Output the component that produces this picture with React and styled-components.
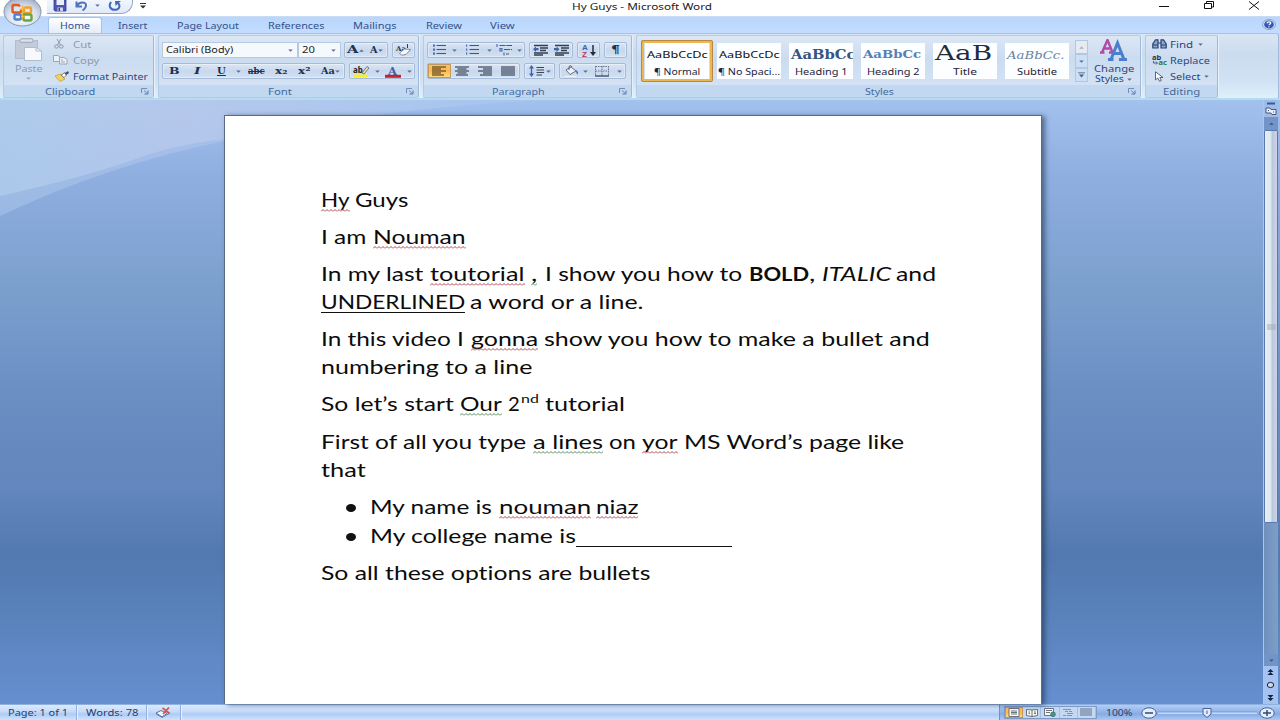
import React, { useLayoutEffect, useRef, useState } from 'react';
import styled, { createGlobalStyle, css } from 'styled-components';

const GlobalStyle = createGlobalStyle`
  * { box-sizing: border-box; }
  body {
    margin: 0;
    overflow: hidden;
    font-family: 'Noto Sans', 'Open Sans', sans-serif;
    font-size: 9.5px;
  }
  svg { display: block; flex: none; }
`;

const Window = styled.div`
  width: 1280px;
  height: 720px;
  display: flex;
  flex-direction: column;
  overflow: hidden;
  background: #bfdbff;
`;

/* ---------- fitted text ---------- */

const FitBox = styled.span`
  display: inline-block;
  flex: none;
  width: ${props => props.$w}px;
  margin-left: ${props => props.$gap || 0}px;
  white-space: nowrap;
`;

const FitInner = styled.span`
  display: inline-block;
  transform-origin: 0 50%;
`;

// stretches its text horizontally to exactly `w` pixels
function Fit({ w, gap, className, children }) {
  const ref = useRef(null);
  const [scale, setScale] = useState(1);

  useLayoutEffect(() => {
    setScale(w / ref.current.offsetWidth);
  }, [w]);

  return (
    <FitBox $w={w} $gap={gap} className={className}>
      <FitInner ref={ref} style={{ transform: `scaleX(${scale})` }}>{children}</FitInner>
    </FitBox>
  );
}

/* ---------- title bar ---------- */

const TitleBar = styled.header`
  position: relative;
  flex: none;
  height: 16px;
  display: flex;
  background: #fff;
`;

const QuickAccess = styled.div`
  width: 86px;
  height: 14px;
  margin-left: 47px;
  padding-left: 6px;
  display: flex;
  align-items: flex-start;
  border: 1px solid #98a8c4;
  border-width: 0 1px 1px 0;
  border-radius: 0 0 12px 0;
  background: linear-gradient(#f2f7fe, #dfe9f8);
`;

const QuickCaret = styled.div`
  width: 13px;
  padding: 4px 0 0 0;
`;

const QuickMore = styled.div`
  width: 20px;
  padding: 3px 0 0 7px;
`;

const TitleText = styled.div`
  margin-left: 419px;
  flex: 0 0 580px;
  height: 13px;
  line-height: 13px;
  color: #222;
`;

const WindowButtons = styled.div`
  display: flex;
  gap: 35px;
  padding: 0 0 0 7px;
`;

const Orb = styled.div`
  position: absolute;
  z-index: 2;
  left: 3px;
  top: -4px;
`;

/* ---------- tabs ---------- */

const TabRow = styled.nav`
  flex: none;
  height: 17px;
  display: flex;
  align-items: flex-end;
  background: linear-gradient(#b9d6fb, #c3dcff);
  border-top: 1px solid #c9dcf4;
  color: #33518c;
`;

const Tab = styled.div`
  height: 16px;
  line-height: 17px;
  width: ${props => props.$w}px;
  margin-left: ${props => props.$gap || 0}px;
  display: flex;
  justify-content: center;
  ${props => props.$active && css`
    background: linear-gradient(#fff, #e3ecf8);
    border: 1px solid #a9c3e6;
    border-bottom: 0;
    border-radius: 3px 3px 0 0;
    line-height: 15px;
  `}
`;

const HelpSlot = styled.div`
  margin: 0 4px 3px auto;
`;

/* ---------- ribbon ---------- */

const Ribbon = styled.section`
  flex: none;
  height: 67px;
  padding: 1px 0 0 3px;
  margin-right: 1px;
  display: flex;
  background: linear-gradient(#d9e5f4, #ccdcef 30%, #d1e2f4 75%, #dff0fb);
  border-top: 1px solid #a8c3e2;
  border-right: 1px solid #9db9dc;
  border-bottom: 2px solid #b5dcee;
  border-radius: 0 3px 3px 0;
  color: #29487f;
`;

const Group = styled.div`
  flex: none;
  width: ${props => props.$w}px;
  height: 63px;
  margin-right: 4px;
  display: flex;
  flex-direction: column;
  border: 1px solid #b3cbe6;
  border-right-color: #9fb9d9;
  border-radius: 2px;
  box-shadow: 1px 0 0 #e8f1fb;
  background: linear-gradient(#dce7f5, #ccdcf0 35%, #d5e4f5);
`;

const GroupBody = styled.div`
  flex: 1;
  position: relative;
  display: flex;
  padding-left: ${props => props.$pad || 0}px;
`;

const GroupLabel = styled.div`
  flex: none;
  height: 12px;
  line-height: 11px;
  display: flex;
  align-items: center;
  background: #c1d8f0;
  color: #45699f;
`;

const LabelText = styled.div`
  flex: 1;
  display: flex;
  justify-content: center;
  ${props => props.$shift && css`padding-right: 6px;`}
`;

const Launcher = styled.div`
  width: 12px;
`;

const PasteButton = styled.div`
  width: 46px;
  padding-top: 2px;
  display: flex;
  flex-direction: column;
  align-items: center;
  color: #8e99ad;
`;

const PasteText = styled.div`
  height: 14px;
  line-height: 14px;
  margin: 1px 0 1px;
`;

const Commands = styled.div`
  display: flex;
  flex-direction: column;
`;

const Command = styled.div`
  height: 16px;
  display: flex;
  align-items: center;
  color: ${props => (props.$off ? '#8e99ad' : '#29487f')};
`;

const CommandIcon = styled.div`
  width: ${props => props.$w || 20}px;
`;

const Rows = styled.div`
  display: flex;
  flex-direction: column;
  padding-top: 6px;
  gap: 5px;
`;

const ToolRow = styled.div`
  display: flex;
  height: 16px;
`;

const ButtonSet = styled.div`
  height: 16px;
  display: flex;
  width: ${props => props.$w}px;
  margin-right: ${props => props.$gap || 0}px;
  border: 1px solid #a5bbd8;
  border-radius: 2px;
  background: linear-gradient(#dbe6f4, #c8d8ed 50%, #d2e1f3);
  box-shadow: inset 0 0 0 1px rgba(255, 255, 255, .35);
`;

const Cell = styled.div`
  flex: ${props => (props.$w ? `0 0 ${props.$w}px` : '1')};
  display: flex;
  align-items: center;
  justify-content: center;
  color: #20304e;
  ${props => props.$active && css`
    background: linear-gradient(#f6c277, #fdb94e 50%, #ffe08a);
    outline: 1px solid #c39a5c;
    outline-offset: -1px;
  `}
`;

const Combo = styled.div`
  width: ${props => props.$w}px;
  height: 16px;
  padding: 0 4px 0 3px;
  margin-right: ${props => props.$gap || 0}px;
  display: flex;
  align-items: center;
  justify-content: space-between;
  border: 1px solid #b4c9e4;
  background: #f5f9fe;
  color: #1b1b1b;
  line-height: 14px;
`;

const Glyph = styled(Fit)`
  font-family: 'DejaVu Serif', 'Liberation Serif', serif;
  font-size: ${props => props.size || 9}px;
  font-weight: bold;
  line-height: 14px;
  font-style: ${props => (props.italic ? 'italic' : 'normal')};
  & > span {
    text-decoration: ${props => props.line || 'none'};
  }
`;

/* ---------- style gallery ---------- */

const Gallery = styled.div`
  display: flex;
  height: 42px;
  margin-top: 4px;
`;

const StyleCard = styled.div`
  width: 72px;
  height: 42px;
  padding: 3px 4px;
  ${props => props.$active && css`
    padding: 0 1px;
    border: 3px solid #eeb64e;
    outline: 1px solid #b58a46;
    outline-offset: -1px;
    border-radius: 2px;
  `}
`;

const StyleFace = styled.div`
  height: 36px;
  overflow: hidden;
  background: #fdfeff;
  display: flex;
  flex-direction: column;
  align-items: center;
  color: #1d2340;
`;

const Sample = styled.div`
  width: 100%;
  height: 21px;
  line-height: ${props => props.$lh || 24}px;
  padding-left: 2px;
  overflow: hidden;
  font-family: ${props => (props.$serif ? "'DejaVu Serif', serif" : "'Noto Sans', sans-serif")};
  font-size: ${props => props.$size || 9.5}px;
  font-weight: ${props => (props.$bold ? 'bold' : 'normal')};
  font-style: ${props => (props.$italic ? 'italic' : 'normal')};
  color: ${props => props.$color || '#111'};
`;

const StyleName = styled.div`
  height: 15px;
  line-height: 15px;
`;

const GalleryScroll = styled.div`
  width: 13px;
  margin-left: 2px;
  display: flex;
  flex-direction: column;
`;

const ScrollCell = styled.div`
  flex: 1;
  display: flex;
  align-items: center;
  justify-content: center;
  border: 1px solid #b2c7e2;
  background: ${props => (props.$light ? '#e6ebf2' : '#cddff4')};
`;

const ChangeStyles = styled.div`
  width: 52px;
  padding-top: 3px;
  display: flex;
  flex-direction: column;
  align-items: center;
  line-height: 10px;
`;

const ChangeLine = styled.div`
  height: 10px;
  display: flex;
  align-items: center;
  gap: 3px;
`;

const ChangeText = styled.div`
  padding-top: 3px;
  display: flex;
  flex-direction: column;
`;

/* ---------- workspace ---------- */

const Workspace = styled.main`
  position: relative;
  flex: 1;
  min-height: 0;
  display: flex;
  justify-content: flex-end;
  background: linear-gradient(
    #a3c1ed 0, #8fafe1 75px, #7b9fcd 190px, #6b8fc3 290px,
    #6286bd 390px, #5279b0 455px, #5a83bc 520px, #668fd0 605px
  );
`;

const Swoosh = styled.svg`
  position: absolute;
  left: 0;
  top: 0;
`;

const Page = styled.article`
  position: relative;
  width: 818px;
  margin: 15px 221px 0 0;
  padding: 69.6px 0 0 96px;
  background: #fff;
  border: 1px solid #5a6b85;
  border-bottom: 0;
  box-shadow: 3px 1px 5px rgba(30, 50, 80, .6);
  font-family: Lato, sans-serif;
  font-size: 18.6px;
  font-variant-ligatures: none;
  line-height: 28px;
  color: #0c0c0c;
`;

const Paragraph = styled.div`
  margin-bottom: ${props => (props.$tight ? 1 : 9.2)}px;
`;

const Line = styled.div`
  height: 28px;
  display: flex;
`;

const Bullet = styled.span`
  width: 10px;
  height: 8px;
  margin: 11px 14px 0 25px;
  border-radius: 50%;
  background: #111;
`;

const wave = color => `url("data:image/svg+xml,%3Csvg xmlns='http://www.w3.org/2000/svg' width='4' height='3'%3E%3Cpath d='M0 2.5L2 .5L4 2.5' fill='none' stroke='%23${color}' stroke-width='.9'/%3E%3C/svg%3E")`;

const Run = styled(Fit)`
  position: relative;
  height: 28px;
  font-weight: ${props => (props.mark === 'bold' ? 'bold' : 'normal')};
  font-style: ${props => (props.mark === 'italic' ? 'italic' : 'normal')};
  ${props => props.mark === 'sup' && css`
    font-size: 11.5px;
    top: -5px;
  `}
  ${props => props.mark === 'under' && css`
    border-bottom: 1.5px solid #111;
    height: 25px;
  `}
  ${props => (props.mark === 'spell' || props.mark === 'grammar') && css`
    &::after {
      content: '';
      position: absolute;
      left: 0;
      right: 0;
      top: 23px;
      height: 3px;
      background: ${wave(props.mark === 'spell' ? 'a8323e' : '3f7a46')} repeat-x;
    }
  `}
`;

const Blank = styled.span`
  width: 156px;
  height: 25px;
  border-bottom: 1.5px solid #111;
`;

const ScrollBar = styled.aside`
  flex: none;
  width: 15px;
  margin-right: 2px;
  display: flex;
  flex-direction: column;
  align-items: center;
  background: #9dbce8;
  border-left: 1px solid #a9c6ef;
`;

const ScrollArrow = styled.div`
  width: 14px;
  height: ${props => props.$h}px;
  display: flex;
  align-items: center;
  justify-content: center;
  background: #7394c6;
`;

const Thumb = styled.div`
  width: 14px;
  height: 393px;
  display: flex;
  align-items: center;
  justify-content: center;
  border: 1px solid #5779ae;
  border-radius: 1px;
  background: linear-gradient(90deg, #e6edf4, #dfe8f0 45%, #b8c8dc 60%, #cdd3ea);
`;

const Track = styled.div`
  width: 14px;
  flex: 1;
  background: linear-gradient(90deg, #6f90bd, #7d9fc6);
`;

const PageKeys = styled.div`
  width: 14px;
  height: 38px;
  display: flex;
  background: #a4c2f2;
`;

/* ---------- status bar ---------- */

const StatusBar = styled.footer`
  flex: none;
  height: 16px;
  display: flex;
  align-items: center;
  border-top: 1px solid #8fb1e2;
  background: linear-gradient(#dceafc, #c5dbfa 45%, #aecbf5 60%, #cfe3fd);
  color: #263e70;
`;

const StatusItem = styled.div`
  width: ${props => props.$w}px;
  height: 15px;
  line-height: 16px;
  padding-left: ${props => props.$pad}px;
  display: flex;
  align-items: center;
  border-right: 1px solid #8fb0de;
  box-shadow: 1px 0 0 #e8f2fe;
`;

const StatusRight = styled.div`
  margin-left: auto;
  width: 281px;
  height: 15px;
  display: flex;
  align-items: center;
  line-height: 15px;
  border-left: 1px solid #6f93c8;
  background: linear-gradient(#b3cdf5, #8db1e8 50%, #86abe4 60%, #a9c9f6);
`;

const ViewSet = styled.div`
  width: 93px;
  height: 13px;
  margin: 0 9px 0 4px;
  display: flex;
  border: 1px solid #7d9bc9;
  background: #c5d8f2;
`;

const ViewCell = styled(Cell)`
  border-right: 1px solid #a7c0e3;
`;

const Zoom = styled.div`
  margin-left: 9px;
`;

/* ---------- icons ---------- */

const Caret = ({ color = '#566b92', up }) => (
  <svg width="5" height="3" viewBox="0 0 6 4">
    <path d={up ? 'M0 3.5H6L3 .5Z' : 'M0 .5H6L3 3.5Z'} fill={color} />
  </svg>
);

const LauncherIcon = () => (
  <svg width="8" height="7" viewBox="0 0 8 7" fill="none" stroke="#6985b0" strokeWidth=".9">
    <path d="M.5 5V.5H6" />
    <path d="M3 2.5L6 5" />
    <path d="M7 2.5V6H3.5" stroke="#4d6a98" />
  </svg>
);

const OrbIcon = () => (
  <svg width="40" height="31" viewBox="0 0 40 31">
    <defs>
      <radialGradient id="orb" cx=".5" cy=".7" r=".65">
        <stop offset="0" stopColor="#fff" />
        <stop offset=".6" stopColor="#dbe1ec" />
        <stop offset="1" stopColor="#a4b1c8" />
      </radialGradient>
    </defs>
    <ellipse cx="19.5" cy="15.5" rx="18.5" ry="14.5" fill="url(#orb)" stroke="#8594ae" />
    <g fill="none" strokeWidth="2.4">
      <path d="M17 10.500L15.500 9H11Q9.500 9 9.500 10.500V15Q9.500 16.500 11 16.500H16.500Q18 16.500 18 15V13" stroke="#dd5a2b" />
      <rect x="21" y="11.500" width="7" height="5.500" rx="1.200" stroke="#f0a030" />
      <rect x="11.500" y="18.500" width="6.500" height="5" rx="1.200" stroke="#4a84cf" />
      <path d="M21 18.500H27Q28.500 18.500 28.500 20V23Q28.500 24.500 27 24.500H22Q20.500 24.500 20.500 23V17" stroke="#62a944" />
    </g>
    <path d="M17 13.500L22 12M18 20.500H22M19.500 9V23" stroke="#efb93c" strokeWidth="1.400" />
  </svg>
);

const SaveIcon = () => (
  <svg width="14" height="12" viewBox="0 0 14 12">
    <path d="M1 0H13V11H2L1 10Z" fill="#4d55b5" stroke="#363b8c" strokeWidth=".8" />
    <path d="M3.5 0H11V5H3.5Z" fill="#e9eefb" />
    <path d="M4.500 7.500H10V11H4.500Z" fill="#cdd4ee" />
    <path d="M5.500 8H7V11H5.500Z" fill="#363b8c" />
  </svg>
);

const UndoIcon = () => (
  <svg width="13" height="12" viewBox="0 0 13 12">
    <path d="M1.500 1.500V6.500H7M2 6C4 1.500 11.500 1.500 11 5.500C10.800 8 9 9.500 7.500 10.500" fill="none" stroke="#5272c0" strokeWidth="2" />
  </svg>
);

const RedoIcon = () => (
  <svg width="14" height="12" viewBox="0 0 14 12">
    <path d="M3.200 2C0 5.500 2.500 9.800 6.500 9.800C11.500 9.800 13 5.500 9.500 2.500" fill="none" stroke="#4468bd" strokeWidth="2" />
    <path d="M7 1H13L7.500 6Z" fill="#4468bd" />
  </svg>
);

const PasteIcon = () => (
  <svg width="27" height="23" viewBox="0 0 27 23">
    <rect x=".5" y="2.500" width="22" height="18" fill="#c3cbd8" stroke="#b4bdcb" />
    <rect x="5" y=".8" width="13" height="3.500" rx="1.500" fill="#dde2ea" stroke="#99a4b6" />
    <path d="M9.500 9.500H21L26.500 13V22.500H9.500Z" fill="#f7f9fc" stroke="#b1bccd" />
    <path d="M21 9.500V13H26.500" fill="none" stroke="#b1bccd" />
  </svg>
);

const CutIcon = () => (
  <svg width="14" height="10" viewBox="-3 0 14 10" fill="none" stroke="#8f99aa">
    <path d="M3 0L6.500 6M7 0L3.500 6" />
    <ellipse cx="2.500" cy="7.500" rx="1.900" ry="1.600" />
    <ellipse cx="7.300" cy="7.500" rx="1.900" ry="1.600" />
  </svg>
);

const CopyIcon = () => (
  <svg width="17" height="10" viewBox="-2 0 17 10" fill="#edf1f6" stroke="#939eb1" strokeWidth=".9">
    <path d="M.5 .5H5L7.500 2.500V6.500H.5Z" />
    <path d="M6.500 2.500H11L14 4.500V9H6.500Z" />
    <path d="M8 5H10M8 7H12" />
  </svg>
);

const BrushIcon = () => (
  <svg width="19" height="11" viewBox="-4 0 19 11">
    <path d="M0 5L5 3L10 8L5 10.500Z" fill="#f4d35a" stroke="#b58c2c" strokeWidth=".6" />
    <path d="M6 4L10 1.500L11.500 4L9 6.500Z" fill="#fff" stroke="#47536b" strokeWidth=".7" />
    <path d="M9.500 2.500L13 0L14 2L11 4Z" fill="#3e4c6b" />
  </svg>
);

const ListIcon = ({ numbered }) => (
  <svg width="15" height="12" viewBox="0 0 15 12">
    {[1.500, 5.500, 9.500].map(y => (
      <g key={y}>
        <rect x="1" y={y - 1} width={numbered ? 1.200 : 2} height="2.200" fill="#4e6fae" />
        <path d={`M4.500 ${y}H14`} stroke="#4c5870" strokeWidth="1.100" />
      </g>
    ))}
  </svg>
);

const MultiListIcon = () => (
  <svg width="17" height="12" viewBox="0 0 17 12">
    <path d="M1 0V3M4 4.500H6V7H4ZM8 8.500V11.500" fill="none" stroke="#4e6fae" strokeWidth="1.200" />
    <path d="M3.500 1.500H16M8 5.500H16M10 10H13" stroke="#4c5870" strokeWidth="1.100" strokeDasharray="6 .8" />
  </svg>
);

const IndentIcon = ({ right }) => (
  <svg width="16" height="12" viewBox="0 0 16 12">
    <path d="M1 1.500H15M7 4H15M7 6.500H13M1 9H15M1 11H10" stroke="#333e54" strokeWidth="1.300" />
    <path d={right ? 'M0 4H2.500V2.500L5.500 5.200L2.500 8V6.300H0Z' : 'M5.500 4H3V2.500L0 5.200L3 8V6.300H5.500Z'} fill="#41639f" />
  </svg>
);

const ALIGN_ROWS = {
  left: [[0, 14], [0, 9], [0, 14], [0, 9], [0, 12]],
  center: [[0, 14], [2.5, 11.5], [0, 14], [2.5, 11.5], [1, 13]],
  right: [[0, 14], [5, 14], [0, 14], [5, 14], [2, 14]],
  full: [[0, 14], [0, 14], [0, 14], [0, 14], [0, 14]],
};

const AlignIcon = ({ mode, color = '#3b4659' }) => (
  <svg width="14" height="10" viewBox="0 0 14 10">
    {ALIGN_ROWS[mode].map(([a, b], i) => (
      <path key={i} d={`M${a} ${i * 2 + 1}H${b}`} stroke={color} strokeWidth="1.200" />
    ))}
  </svg>
);

const SpacingIcon = () => (
  <svg width="17" height="12" viewBox="0 0 17 12">
    <path d="M2.500 2V10" stroke="#3b63b0" strokeWidth="1.300" />
    <path d="M0 3.500L2.500 0L5 3.500ZM0 8.500L2.500 12L5 8.500Z" fill="#3b63b0" />
    <path d="M7.500 2.500H15M7.500 5H15M7.500 7.500H15M7.500 10H13" stroke="#3b4659" strokeWidth="1.200" />
  </svg>
);

const SortArrow = () => (
  <svg width="6" height="11" viewBox="0 0 6 11">
    <path d="M3 0V9" stroke="#222c42" strokeWidth="1.500" />
    <path d="M0 7H6L3 11Z" fill="#222c42" />
  </svg>
);

const BucketIcon = () => (
  <svg width="16" height="13" viewBox="0 0 16 13">
    <path d="M3 5L8 2L13 6L7 9.500Z" fill="#eef2f8" stroke="#54637e" strokeWidth=".9" />
    <path d="M6 5V1.500Q8 -.5 9 2" fill="none" stroke="#54637e" />
    <path d="M13 5Q16 7 14.500 9.500Q13 8.500 13 5" fill="#3c63ad" />
    <rect x="1" y="10.200" width="13" height="2.500" fill="#f4f6fa" stroke="#b3bccb" strokeWidth=".4" />
  </svg>
);

const BordersIcon = () => (
  <svg width="14" height="11" viewBox="0 0 14 11" stroke="#66748f" fill="none">
    <path d="M.5 .5H13.500M.5 5H13.500M.5 0V10M7 0V10M13.500 0V10" strokeDasharray="1.500 1" />
    <path d="M0 10H14" stroke="#35435e" strokeWidth="1.300" />
  </svg>
);

const ClearIcon = () => (
  <svg width="17" height="12" viewBox="0 0 17 12">
    <text x="1" y="6.500" fontSize="7" fontFamily="DejaVu Serif" fontWeight="bold" fill="#2b3a58">Aa</text>
    <path d="M12.500 0V4" stroke="#2b3a58" />
    <path d="M4.500 9L9.500 5L15.500 5.500L11 10.500L6.500 11.200Z" fill="#f8f9fc" stroke="#6a7790" strokeWidth=".8" />
  </svg>
);

const FindIcon = () => (
  <svg width="15" height="10" viewBox="0 0 15 10" fill="#8fa6cf" stroke="#2a4375" strokeWidth="1.200">
    <path d="M3.500 .8H6V9H.8V5Z" />
    <path d="M9 .8H11.500L14.200 5V9H9Z" />
    <path d="M6 4H9M1 6H6M9 6H14" />
  </svg>
);

const CursorIcon = () => (
  <svg width="12" height="11" viewBox="-2 0 12 11">
    <path d="M1.500 .8V8.800L3.800 7L5.500 10.300L7.300 9.500L5.800 6.500H9Z" fill="#fff" stroke="#33425f" strokeWidth=".8" />
  </svg>
);

const HelpIcon = () => (
  <svg width="14" height="11" viewBox="0 0 14 11">
    <ellipse cx="7" cy="5.500" rx="6.500" ry="5" fill="#cfdcf3" stroke="#8194bb" strokeWidth=".8" />
    <ellipse cx="7" cy="5.500" rx="4.800" ry="3.900" fill="#3157b8" />
    <path d="M5 4.300Q5.300 2.800 7.200 2.900Q9.200 3.200 8.500 4.600Q7.200 5.300 7 6.200M6.900 7.300V8.300" fill="none" stroke="#fff" strokeWidth="1.200" />
  </svg>
);

const ProofIcon = () => (
  <svg width="17" height="11" viewBox="0 0 17 11">
    <path d="M1 6L6 3.500L12 6.500L7 9.800Z" fill="#f4f7fc" stroke="#57709f" />
    <path d="M1 7L7 10.500L15 6" fill="none" stroke="#6d87b8" />
    <path d="M7.500 .8L14.500 6.500M14 .5L8 7" stroke="#d5534a" strokeWidth="1.700" />
  </svg>
);

const ViewIcon = ({ kind }) => (
  <svg width="12" height="9" viewBox="0 0 12 9" fill="#fbfaf0" stroke="#5c6577" strokeWidth=".9">
    {kind === 'print' && <path d="M1 .5H11V8.500H1ZM3 3H9M3 4.500H9M3 6H9" />}
    {kind === 'read' && <path d="M.5 1.500L6 2L11.500 1.500V7.500L6 8.500L.5 7.500ZM6 2V8.500M2.500 4H4M8 4H10M2.500 5.500H4M8 5.500H10" />}
    {kind === 'web' && (
      <g>
        <path d="M.5 .5H9.500V7.500H.5ZM2 2.500H8M2 4.500H6" />
        <circle cx="9" cy="6.300" r="2.300" fill="#4d9a78" stroke="#346d86" />
      </g>
    )}
    {kind === 'outline' && <path d="M1 1.500H9M3 3.500H6M7 3.500H10M5 5.500H11M1 7.500H4M5 7.500H10" stroke="#8090ad" strokeWidth="1.200" />}
    {kind === 'draft' && <path d="M0 1H12M0 3H12M0 5H12M0 7H12" stroke="#8293b2" strokeWidth="1.500" />}
  </svg>
);

const ChangeIcon = () => (
  <svg width="30" height="22" viewBox="0 0 30 22">
    <path d="M1 13.500H5.500M10 13.500H15M3 13.500L8.500 1L13.500 13.500M5 9.500H11" fill="none" stroke="#b24ba6" strokeWidth="2.400" />
    <path d="M9 20.500H14.500M20 20.500H28M12 20.500L18.500 4L25 20.500M14.500 14.500H22" fill="none" stroke="#4a7fcf" strokeWidth="3" />
  </svg>
);

const ZoomSlider = () => (
  <svg width="135" height="15" viewBox="0 0 135 15">
    <path d="M17 8H116" stroke="#d9e8fc" strokeWidth="1.500" />
    <path d="M17 7H116" stroke="#6a8dc4" strokeWidth=".7" />
    {[8, 126].map(x => (
      <g key={x}>
        <ellipse cx={x} cy="8" rx="7.200" ry="5.200" fill="#e3eefc" stroke="#46639a" />
        <path d={`M${x - 4} 8H${x + 4}`} stroke="#34496f" strokeWidth="1.500" />
      </g>
    ))}
    <path d="M126 5V11" stroke="#34496f" strokeWidth="1.500" />
    <path d="M62 3.500H70V9L66 12.500L62 9Z" fill="#dfeafb" stroke="#46639a" />
    <path d="M66 5.500V9" stroke="#46639a" />
  </svg>
);

/* ---------- data ---------- */

const TABS = [
  { name: 'Home', w: 54, text: 30, gap: 48, active: true },
  { name: 'Insert', w: 40, text: 29, gap: 10 },
  { name: 'Page Layout', w: 76, text: 62, gap: 18 },
  { name: 'References', w: 70, text: 56, gap: 15 },
  { name: 'Mailings', w: 60, text: 44, gap: 14 },
  { name: 'Review', w: 50, text: 36, gap: 14 },
  { name: 'View', w: 40, text: 25, gap: 13 },
];

const STYLES = [
  { name: '¶ Normal', w: 46, sample: 'AaBbCcDc', sw: 60, active: true },
  { name: '¶ No Spaci...', w: 62, sample: 'AaBbCcDc', sw: 60 },
  { name: 'Heading 1', w: 53, sample: 'AaBbCc', sw: 64, serif: true, bold: true, size: 12, color: '#35557f' },
  { name: 'Heading 2', w: 53, sample: 'AaBbCc', sw: 58, serif: true, bold: true, size: 11, color: '#5580b5' },
  { name: 'Title', w: 24, sample: 'AaB', sw: 57, serif: true, size: 20, lh: 20, color: '#1e2c42' },
  { name: 'Subtitle', w: 40, sample: 'AaBbCc.', sw: 58, serif: true, italic: true, size: 10.5, color: '#6582a8' },
];

// [text, width, gap before, mark]
const PARAGRAPHS = [
  [[['Hy', 29, 0, 'spell'], ['Guys', 53, 5]]],
  [[['I am', 46, 0], ['Nouman', 93, 6, 'spell']]],
  [
    [['In my last', 103, 0], ['toutorial ', 95, 6, 'spell'], [',', 6, 6, 'grammar'], ['I show you how to', 197, 8], ['BOLD', 60, 7, 'bold'], [',', 6, 0], ['ITALIC', 69, 7, 'italic'], ['and', 40, 5]],
    [['UNDERLINED', 144, 0, 'under'], ['a word or a line.', 173, 5]],
  ],
  [
    [['In this video I', 143, 0], ['gonna', 67, 7, 'spell'], ['show you how to make a bullet and', 386, 6]],
    [['numbering to a line', 211, 0]],
  ],
  [[['So let’s start', 133, 0], ['Our', 42, 6, 'grammar'], ['2', 12, 6], ['nd', 18, 1, 'sup'], ['tutorial', 80, 6]]],
  [
    [['First of all you type', 205, 0], ['a lines', 70, 7, 'grammar'], ['on', 27, 6], ['yor', 36, 6, 'spell'], ['MS Word’s page like', 220, 6]],
    [['that', 45, 0]],
  ],
];

const TextLine = ({ runs, bullet }) => (
  <Line>
    {bullet && <Bullet />}
    {runs.map(([text, w, gap, mark]) => (
      <Run key={text + w} w={w} gap={gap} mark={mark}>{text}</Run>
    ))}
  </Line>
);

const RibbonGroup = ({ w, label, lw, pad, launcher = true, children }) => (
  <Group $w={w}>
    <GroupBody $pad={pad}>{children}</GroupBody>
    <GroupLabel>
      <LabelText $shift={launcher}><Fit w={lw}>{label}</Fit></LabelText>
      {launcher && <Launcher><LauncherIcon /></Launcher>}
    </GroupLabel>
  </Group>
);

function App() {
  return (
    <Window>
      <GlobalStyle />
      <TitleBar>
        <Orb><OrbIcon /></Orb>
        <QuickAccess>
          <Cell $w={14}><SaveIcon /></Cell>
          <Cell $w={28}><UndoIcon /></Cell>
          <QuickCaret><Caret /></QuickCaret>
          <RedoIcon />
        </QuickAccess>
        <QuickMore>
          <svg width="6" height="6" viewBox="0 0 6 6"><path d="M0 .5H6" stroke="#333" /><path d="M0 2.500H6L3 5.500Z" fill="#333" /></svg>
        </QuickMore>
        <TitleText><Fit w={140}>Hy Guys - Microsoft Word</Fit></TitleText>
        <WindowButtons>
          <svg width="10" height="12" viewBox="0 0 10 12"><path d="M0 6.500H10" stroke="#111" /></svg>
          <svg width="10" height="12" viewBox="0 0 10 12" fill="none" stroke="#111"><path d="M.5 3.500H7.500V8.500H.5Z" /><path d="M2.500 3V1.500H9.500V7H8" /></svg>
          <svg width="10" height="12" viewBox="0 0 10 12"><path d="M0 1.500L10 9.500M10 1.500L0 9.500" stroke="#111" /></svg>
        </WindowButtons>
      </TitleBar>

      <TabRow>
        {TABS.map(tab => (
          <Tab key={tab.name} $w={tab.w} $gap={tab.gap} $active={tab.active}>
            <Fit w={tab.text}>{tab.name}</Fit>
          </Tab>
        ))}
        <HelpSlot><HelpIcon /></HelpSlot>
      </TabRow>

      <Ribbon>
        <RibbonGroup w={151} label="Clipboard" lw={50} pad={1}>
          <PasteButton>
            <PasteIcon />
            <PasteText><Fit w={27}>Paste</Fit></PasteText>
            <Caret color="#9aa5b8" />
          </PasteButton>
          <Commands>
            <Command $off><CommandIcon $w={22}><CutIcon /></CommandIcon><Fit w={18}>Cut</Fit></Command>
            <Command $off><CommandIcon $w={22}><CopyIcon /></CommandIcon><Fit w={26}>Copy</Fit></Command>
            <Command><CommandIcon $w={22}><BrushIcon /></CommandIcon><Fit w={75}>Format Painter</Fit></Command>
          </Commands>
        </RibbonGroup>

        <RibbonGroup w={261} label="Font" lw={24} pad={3}>
          <Rows>
            <ToolRow>
              <Combo $w={136}><Fit w={67}>Calibri (Body)</Fit><Caret /></Combo>
              <Combo $w={43} $gap={3}><Fit w={13}>20</Fit><Caret /></Combo>
              <ButtonSet $w={44} $gap={4}>
                <Cell><Glyph w={12} size={11}>A</Glyph><Caret up /></Cell>
                <Cell><Glyph w={8} size={8.5}>A</Glyph><Caret /></Cell>
              </ButtonSet>
              <ButtonSet $w={23}><Cell><ClearIcon /></Cell></ButtonSet>
            </ToolRow>
            <ToolRow>
              <ButtonSet $w={183} $gap={4}>
                <Cell $w={22}><Glyph w={10} size={10}>B</Glyph></Cell>
                <Cell $w={24}><Glyph w={7} size={10} italic="true">I</Glyph></Cell>
                <Cell $w={24}><Glyph w={9} size={9} line="underline">U</Glyph></Cell>
                <Cell $w={10}><Caret /></Cell>
                <Cell $w={27}><Glyph w={17} size={8.5} line="line-through">abc</Glyph></Cell>
                <Cell $w={22}><Glyph w={12} size={10}>x₂</Glyph></Cell>
                <Cell $w={24}><Glyph w={12} size={10}>x²</Glyph></Cell>
                <Cell><Glyph w={14} size={9}>Aa</Glyph><Caret /></Cell>
              </ButtonSet>
              <ButtonSet $w={66}>
                <Cell $w={22}>
                  <svg width="17" height="13" viewBox="0 0 17 13">
                    <rect x="0" y="9.500" width="15" height="3" fill="#f3f322" />
                    <text x="0" y="8" fontSize="8" fontFamily="Noto Sans" fontWeight="bold" fill="#222">ab</text>
                    <path d="M9 8L14 1.500L16 3L11 9Z" fill="#e9dfb0" stroke="#5b6270" strokeWidth=".8" />
                  </svg>
                </Cell>
                <Cell $w={10}><Caret /></Cell>
                <Cell $w={22}>
                  <svg width="16" height="13" viewBox="0 0 16 13">
                    <text x="3" y="9.500" fontSize="11.500" fontFamily="DejaVu Serif" fontWeight="bold" fill="#3f61a5">A</text>
                    <rect x="0" y="9.800" width="16" height="3" fill="#d21f27" />
                  </svg>
                </Cell>
                <Cell $w={10}><Caret /></Cell>
              </ButtonSet>
            </ToolRow>
          </Rows>
        </RibbonGroup>

        <RibbonGroup w={209} label="Paragraph" lw={53} pad={3}>
          <Rows>
            <ToolRow>
              <ButtonSet $w={98} $gap={4}>
                <Cell $w={22}><ListIcon /></Cell>
                <Cell $w={9}><Caret /></Cell>
                <Cell $w={26}><ListIcon numbered /></Cell>
                <Cell $w={9}><Caret /></Cell>
                <Cell $w={21}><MultiListIcon /></Cell>
                <Cell><Caret /></Cell>
              </ButtonSet>
              <ButtonSet $w={44} $gap={4}>
                <Cell><IndentIcon /></Cell>
                <Cell><IndentIcon right /></Cell>
              </ButtonSet>
              <ButtonSet $w={23} $gap={4}>
                <Cell>
                  <svg width="8" height="13" viewBox="0 0 8 13" fontFamily="Liberation Sans" fontWeight="bold" fontSize="8">
                    <text x="0" y="6" fill="#3b5fae">A</text>
                    <text x="0" y="12.500" fill="#b23a55">Z</text>
                  </svg>
                  <SortArrow />
                </Cell>
              </ButtonSet>
              <ButtonSet $w={23}><Cell><Glyph w={9} size={11}>¶</Glyph></Cell></ButtonSet>
            </ToolRow>
            <ToolRow>
              <ButtonSet $w={93} $gap={4}>
                <Cell $active><AlignIcon mode="left" color="#5c4520" /></Cell>
                <Cell><AlignIcon mode="center" /></Cell>
                <Cell><AlignIcon mode="right" /></Cell>
                <Cell><AlignIcon mode="full" /></Cell>
              </ButtonSet>
              <ButtonSet $w={31} $gap={4}><Cell><SpacingIcon /><Caret /></Cell></ButtonSet>
              <ButtonSet $w={67}>
                <Cell $w={21}><BucketIcon /></Cell>
                <Cell $w={9}><Caret /></Cell>
                <Cell $w={24}><BordersIcon /></Cell>
                <Cell><Caret /></Cell>
              </ButtonSet>
            </ToolRow>
          </Rows>
        </RibbonGroup>

        <RibbonGroup w={505} label="Styles" lw={29} pad={4}>
          <Gallery>
            {STYLES.map(s => (
              <StyleCard key={s.name} $active={s.active}>
                <StyleFace>
                  <Sample $serif={s.serif} $size={s.size} $bold={s.bold} $italic={s.italic} $color={s.color} $lh={s.lh}>
                    <Fit w={s.sw}>{s.sample}</Fit>
                  </Sample>
                  <StyleName><Fit w={s.w}>{s.name}</Fit></StyleName>
                </StyleFace>
              </StyleCard>
            ))}
            <GalleryScroll>
              <ScrollCell $light><Caret up color="#a3adbd" /></ScrollCell>
              <ScrollCell><Caret /></ScrollCell>
              <ScrollCell>
                <svg width="7" height="6" viewBox="0 0 8 7"><path d="M0 1H8" stroke="#4a5f87" /><path d="M1 3H7L4 6.500Z" fill="#4a5f87" /></svg>
              </ScrollCell>
            </GalleryScroll>
          </Gallery>
          <ChangeStyles>
            <ChangeIcon />
            <ChangeText>
              <ChangeLine><Fit w={40}>Change</Fit></ChangeLine>
              <ChangeLine><Fit w={29} gap={1}>Styles</Fit><Caret /></ChangeLine>
            </ChangeText>
          </ChangeStyles>
        </RibbonGroup>

        <RibbonGroup w={73} label="Editing" lw={37} pad={6} launcher={false}>
          <Commands>
            <Command><CommandIcon $w={18}><FindIcon /></CommandIcon><Fit w={23}>Find</Fit><CommandIcon $w={5} /><Caret /></Command>
            <Command>
              <CommandIcon $w={18}>
                <svg width="16" height="12" viewBox="0 0 16 12" fontFamily="Noto Sans" fontWeight="bold" fontSize="7.500">
                  <text x="0" y="6" fill="#2b3648">ab</text>
                  <text x="6.500" y="11" fill="#2f7a3e">ac</text>
                  <path d="M1.500 7V9H5M4 7.500L5.500 9L4 10.500" fill="none" stroke="#44618f" />
                </svg>
              </CommandIcon>
              <Fit w={40}>Replace</Fit>
            </Command>
            <Command><CommandIcon $w={18}><CursorIcon /></CommandIcon><Fit w={30}>Select</Fit><CommandIcon $w={4} /><Caret /></Command>
          </Commands>
        </RibbonGroup>
      </Ribbon>

      <Workspace>
        <Swoosh width="1264" height="125" viewBox="0 0 1264 125">
          <defs>
            <linearGradient id="sky" x1="0" y1="0" x2="1" y2="0">
              <stop offset="0" stopColor="#b0cdec" />
              <stop offset=".3" stopColor="#b8c9ec" />
              <stop offset=".6" stopColor="#b0c8ef" />
              <stop offset="1" stopColor="#a3c1ed" />
            </linearGradient>
          </defs>
          <path d="M0 116Q110 64 225 41Q450 -4 620 0H0Z" fill="url(#sky)" opacity=".45" />
          <path d="M0 96Q90 76 150 54Q190 42 225 39Q450 -4 620 0H0Z" fill="url(#sky)" opacity=".75" />
        </Swoosh>
        <Page>
          {PARAGRAPHS.map((lines, i) => (
            <Paragraph key={i}>
              {lines.map((runs, j) => <TextLine key={j} runs={runs} />)}
            </Paragraph>
          ))}
          <Paragraph $tight>
            <TextLine bullet runs={[['My name is', 122, 0], ['nouman', 92, 7, 'spell'], ['niaz', 42, 5, 'spell']]} />
          </Paragraph>
          <Paragraph>
            <Line>
              <Bullet />
              <Run w={206}>My college name is</Run>
              <Blank />
            </Line>
          </Paragraph>
          <TextLine runs={[['So all these options are bullets', 330, 0]]} />
        </Page>
        <ScrollBar>
          <svg width="12" height="17" viewBox="0 0 12 17">
            <path d="M2 3.500H10" stroke="#3a5a94" strokeWidth="2" />
            <path d="M1 8H5L6 9.500H11V14.500H7L6 13H1Z" fill="#e8eefa" stroke="#3b4a6b" strokeWidth=".9" />
            <path d="M3 10.500H4M8 12H9" stroke="#3b4a6b" />
          </svg>
          <ScrollArrow $h={13}><Caret up color="#33558f" /></ScrollArrow>
          <Thumb>
            <svg width="9" height="6" viewBox="0 0 9 6"><path d="M0 1H9M0 3H9M0 5H9" stroke="#a2a9b3" /></svg>
          </Thumb>
          <Track />
          <ScrollArrow $h={12}><Caret color="#33558f" /></ScrollArrow>
          <PageKeys>
            <svg width="13" height="38" viewBox="0 0 13 38" fill="#14223f">
              <path d="M3.500 6L6.500 3L9.500 6ZM3.500 9L6.500 6L9.500 9ZM3.500 29H9.500L6.500 32ZM3.500 32H9.500L6.500 35Z" />
              <ellipse cx="6.500" cy="19" rx="3.200" ry="2.600" fill="#cfd9e8" stroke="#14223f" />
            </svg>
          </PageKeys>
        </ScrollBar>
      </Workspace>

      <StatusBar>
        <StatusItem $w={77} $pad={8}><Fit w={60}>Page: 1 of 1</Fit></StatusItem>
        <StatusItem $w={70} $pad={9}><Fit w={52}>Words: 78</Fit></StatusItem>
        <StatusItem $w={34} $pad={8}><ProofIcon /></StatusItem>
        <StatusRight>
          <ViewSet>
            <ViewCell $active><ViewIcon kind="print" /></ViewCell>
            <ViewCell><ViewIcon kind="read" /></ViewCell>
            <ViewCell><ViewIcon kind="web" /></ViewCell>
            <ViewCell><ViewIcon kind="outline" /></ViewCell>
            <ViewCell><ViewIcon kind="draft" /></ViewCell>
          </ViewSet>
          <Fit w={26}>100%</Fit>
          <Zoom><ZoomSlider /></Zoom>
        </StatusRight>
      </StatusBar>
    </Window>
  );
}

export default App;
